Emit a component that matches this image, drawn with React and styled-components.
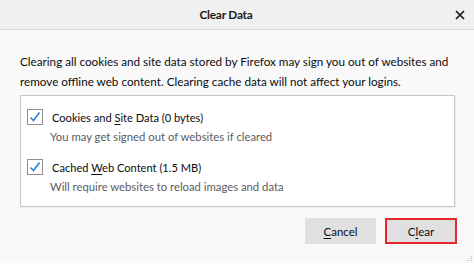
import React from "react";
import styled, { createGlobalStyle } from "styled-components";

const GlobalStyle = createGlobalStyle`
  html, body { margin: 0; padding: 0; background: #ffffff; }
  body { font-family: "Segoe UI", Lato, "Noto Sans", sans-serif; color: #0c0c0d; }
  * { box-sizing: border-box; }
`;

const Dialog = styled.div`
  width: 474px;
  height: 263px;
  background: #f9f9fa;
  display: flex;
  flex-direction: column;
  position: relative;
`;

const TitleBar = styled.div`
  height: 30px;
  background: #f0f0f0;
  border-bottom: 1px solid #dcdcdc;
  display: flex;
  align-items: center;
`;

const Title = styled.div`
  flex: 1;
  text-align: center;
  padding-left: 6px;
  font-size: 11.8px;
  font-weight: 700;
  letter-spacing: -0.2px;
  color: #1a1a1a;
`;

const CloseButton = styled.div`
  flex: 0 0 28px;
  display: flex;
  justify-content: center;
`;

const Body = styled.div`
  flex: 1;
  padding: 21px 19px 0 20px;
  display: flex;
  flex-direction: column;
`;

const Description = styled.p`
  margin: 0;
  font-size: 11.7px;
  line-height: 20px;
  white-space: nowrap;
  color: #0c0c0d;
`;

const OptionsBox = styled.div`
  margin-top: 4px;
  height: 112px;
  background: #ffffff;
  border: 1px solid #c6c6c8;
  box-shadow: 1px 1px 1px rgba(0, 0, 0, 0.05);
  padding: 11px 6px 0 6px;
  display: flex;
  flex-direction: column;
  gap: 10px;
`;

const Option = styled.div`
  display: flex;
  flex-direction: column;
`;

const OptionRow = styled.label`
  display: flex;
  align-items: center;
  gap: 9px;
  height: 20px;
`;

const Box = styled.span`
  width: 16px;
  height: 16px;
  border: 1px solid #8f8f93;
  background: #ffffff;
  display: flex;
  align-items: center;
  justify-content: center;
`;

const Label = styled.span`
  font-size: 11.1px;
  color: #0c0c0d;
`;

const Hint = styled.div`
  padding-left: 23px;
  font-size: 11.3px;
  line-height: 20px;
  color: #5b5b5f;
`;

const Footer = styled.div`
  display: flex;
  justify-content: flex-end;
  gap: 9px;
  padding: 11px 17px 0 0;
  margin-right: -19px;
`;

const Button = styled.button`
  width: ${(p) => p.$w}px;
  height: 26px;
  background: #e0e0e1;
  border: ${(p) => (p.$focused ? "2px solid #e5262b" : "1px solid #e0e0e1")};
  font-family: inherit;
  font-size: 11.5px;
  color: #0c0c0d;
  padding: 0;
  display: flex;
  align-items: center;
  justify-content: center;
`;

const U = styled.span`
  text-decoration: underline;
  text-underline-offset: 2px;
`;

const Grip = styled.svg`
  position: absolute;
  right: 1px;
  bottom: 1px;
`;

const Check = () => (
  <svg width="14" height="14" viewBox="0 0 14 14">
    <path d="M2.5 7.5 L5.5 10.5 L11.5 2.5" fill="none" stroke="#2a7fd4" strokeWidth="1.5" />
  </svg>
);

const CloseIcon = () => (
  <svg width="10" height="10" viewBox="0 0 10 10">
    <path d="M1 1 L9 9 M9 1 L1 9" stroke="#1a1a1a" strokeWidth="1.7" />
  </svg>
);

export default function App() {
  return (
    <>
      <GlobalStyle />
      <Dialog>
        <TitleBar>
          <Title>Clear Data</Title>
          <CloseButton>
            <CloseIcon />
          </CloseButton>
        </TitleBar>
        <Body>
          <Description>
            Clearing all cookies and site data stored by Firefox may sign you out of websites and
            <br />
            remove offline web content. Clearing cache data will not affect your logins.
          </Description>
          <OptionsBox>
            <Option>
              <OptionRow>
                <Box>
                  <Check />
                </Box>
                <Label>
                  Cookies and <U>S</U>ite Data (0 bytes)
                </Label>
              </OptionRow>
              <Hint>You may get signed out of websites if cleared</Hint>
            </Option>
            <Option>
              <OptionRow>
                <Box>
                  <Check />
                </Box>
                <Label>
                  Cached <U>W</U>eb Content (1.5 MB)
                </Label>
              </OptionRow>
              <Hint>Will require websites to reload images and data</Hint>
            </Option>
          </OptionsBox>
          <Footer>
            <Button $w={71}>
              <span>
                <U>C</U>ancel
              </span>
            </Button>
            <Button $w={72} $focused>
              <span>
                C<U>l</U>ear
              </span>
            </Button>
          </Footer>
        </Body>
        <Grip width="6" height="6" viewBox="0 0 6 6">
          <rect x="4" y="0" width="1" height="1" fill="#b8b8b8" />
          <rect x="2" y="2" width="1" height="1" fill="#b8b8b8" />
          <rect x="4" y="2" width="1" height="1" fill="#b8b8b8" />
          <rect x="0" y="4" width="1" height="1" fill="#b8b8b8" />
          <rect x="2" y="4" width="1" height="1" fill="#b8b8b8" />
          <rect x="4" y="4" width="1" height="1" fill="#b8b8b8" />
        </Grip>
      </Dialog>
    </>
  );
}
